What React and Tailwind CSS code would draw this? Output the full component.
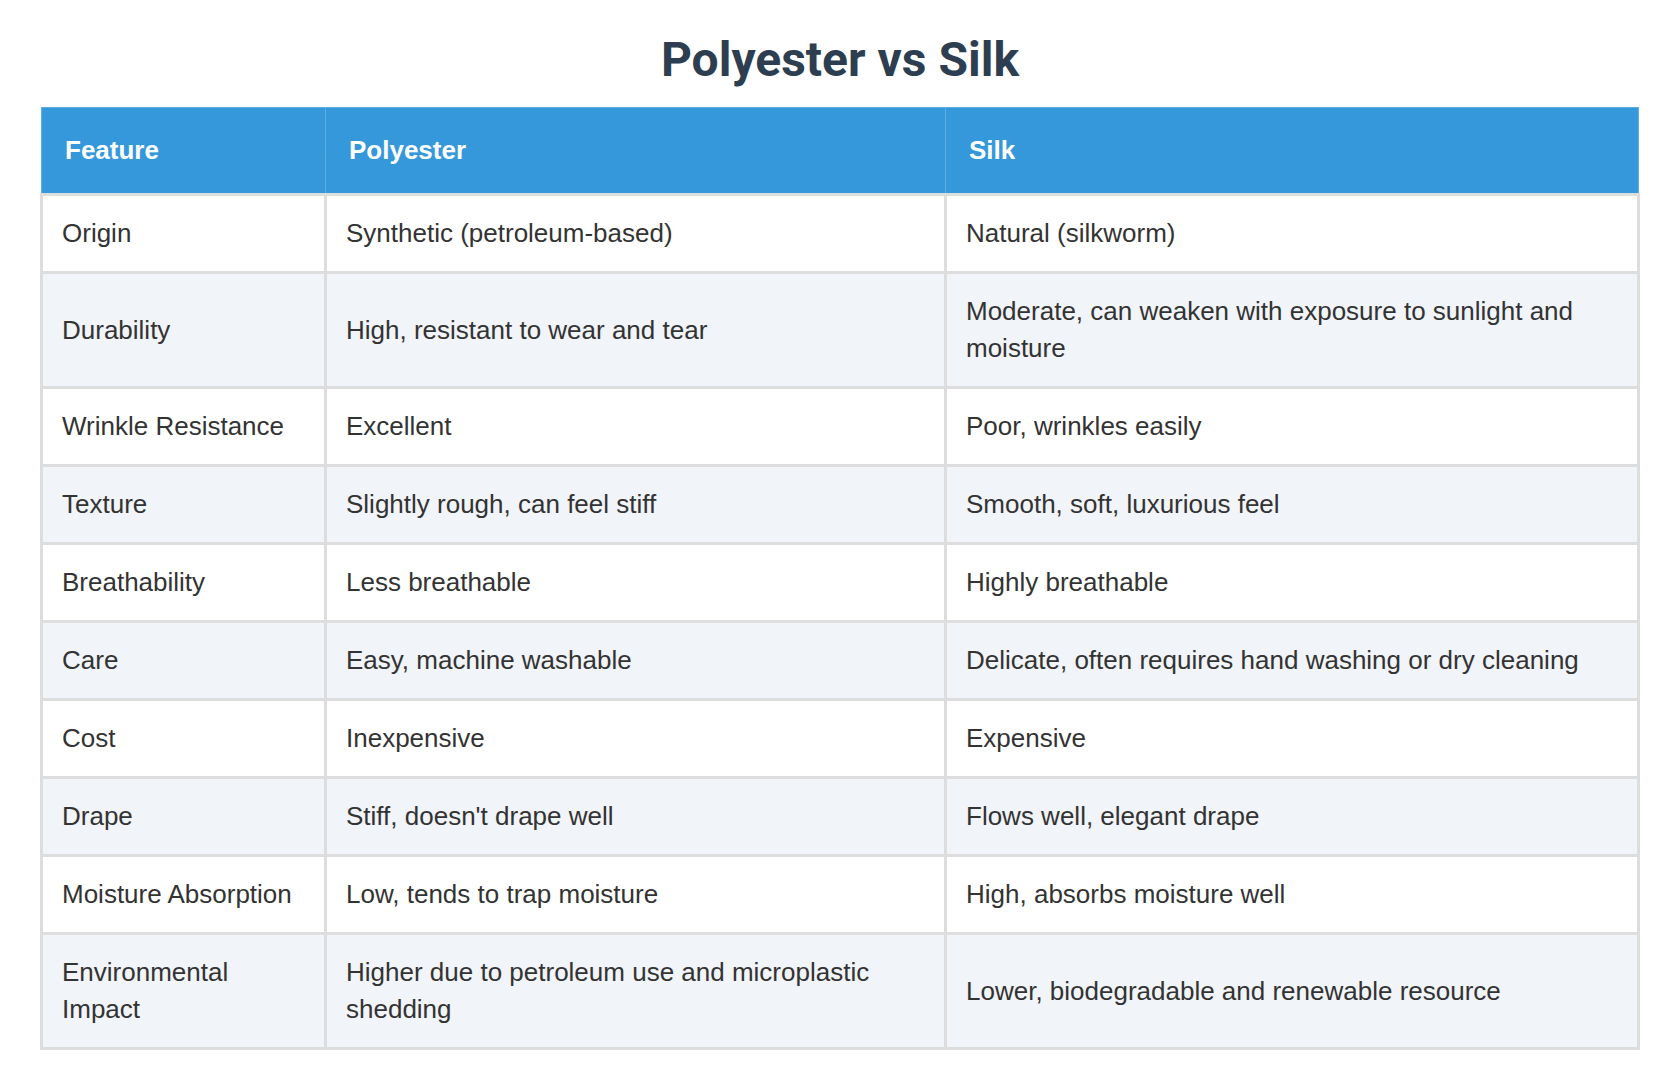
const rows = [
  ['Origin', 'Synthetic (petroleum-based)', 'Natural (silkworm)'],
  ['Durability', 'High, resistant to wear and tear', 'Moderate, can weaken with exposure to sunlight and moisture'],
  ['Wrinkle Resistance', 'Excellent', 'Poor, wrinkles easily'],
  ['Texture', 'Slightly rough, can feel stiff', 'Smooth, soft, luxurious feel'],
  ['Breathability', 'Less breathable', 'Highly breathable'],
  ['Care', 'Easy, machine washable', 'Delicate, often requires hand washing or dry cleaning'],
  ['Cost', 'Inexpensive', 'Expensive'],
  ['Drape', "Stiff, doesn't drape well", 'Flows well, elegant drape'],
  ['Moisture Absorption', 'Low, tends to trap moisture', 'High, absorbs moisture well'],
  ['Environmental Impact', 'Higher due to petroleum use and microplastic shedding', 'Lower, biodegradable and renewable resource'],
];

export default function App() {
  return (
    <div className="min-h-screen bg-white px-10 pt-[31px] pb-10">
      <h1 className="text-center text-[48px] leading-[58px] font-bold text-[#2c3e50] mb-[18px] font-['Roboto',sans-serif]">
        Polyester vs Silk
      </h1>

      <table className="w-[1597px] table-fixed border-collapse font-['Liberation_Sans',Arial,sans-serif] text-[26px] leading-[37px]">
        <colgroup>
          <col className="w-[284px]" />
          <col className="w-[620px]" />
          <col className="w-[693px]" />
        </colgroup>
        <thead>
          <tr className="bg-[#3498db]">
            {['Feature', 'Polyester', 'Silk'].map(h => (
              <th key={h} className="border border-[#5eade2] px-[23px] py-6 text-left font-bold text-white align-middle">
                {h}
              </th>
            ))}
          </tr>
        </thead>
        <tbody>
          {rows.map((r, i) => (
            <tr key={r[0]} className={i % 2 === 1 ? 'bg-[#f1f4f9]' : 'bg-white'}>
              {r.map((c, j) => (
                <td key={j} className="border-[3px] border-[#dddddd] px-[19px] py-[19px] text-[#333333] align-middle">
                  {c}
                </td>
              ))}
            </tr>
          ))}
        </tbody>
      </table>
    </div>
  );
}
